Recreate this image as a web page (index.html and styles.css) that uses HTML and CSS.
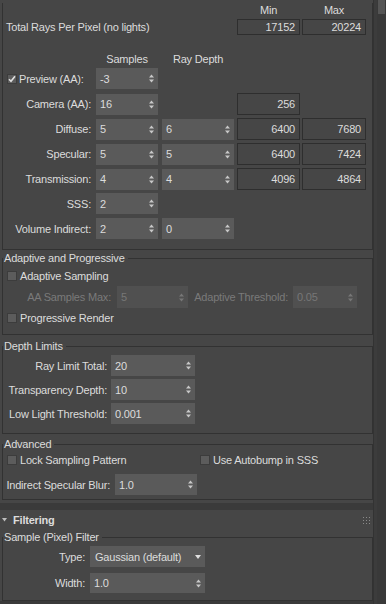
FILE: index.html
```html
<!DOCTYPE html>
<html>
<head>
<meta charset="utf-8">
<link rel="stylesheet" href="styles.css">
</head>
<body>
<div class="app">
  <div class="panel">
    <div class="rollout rollout-main">
      <div class="rays">
        <div class="r r-mm">
          <span></span><span></span><span></span>
          <span class="colhead w63">Min</span>
          <span class="colhead w64">Max</span>
        </div>
        <div class="r r-total">
          <span class="total-label">Total Rays Per Pixel (no lights)</span>
          <span class="ro small w63">17152</span>
          <span class="ro small w64">20224</span>
        </div>
        <div class="r r-cols">
          <span></span>
          <span class="colhead w62">Samples</span>
          <span class="colhead w72">Ray Depth</span>
        </div>
        <div class="r r-first">
          <label class="lbl-left"><span class="cb on"><svg viewBox="0 0 8 8"><path d="M1 4.2L3 6.3L7 1.2" /></svg></span>Preview (AA):</label>
          <span class="spin w62">-3<svg class="arr" viewBox="0 0 5 9"><path d="M0 3.6L2.5 0.6L5 3.6Z M0 5.4L2.5 8.4L5 5.4Z"/></svg></span>
        </div>
        <div class="r">
          <label class="lbl">Camera (AA):</label>
          <span class="spin w62">16<svg class="arr" viewBox="0 0 5 9"><path d="M0 3.6L2.5 0.6L5 3.6Z M0 5.4L2.5 8.4L5 5.4Z"/></svg></span>
          <span></span>
          <span class="ro w63">256</span>
        </div>
        <div class="r">
          <label class="lbl">Diffuse:</label>
          <span class="spin w62">5<svg class="arr" viewBox="0 0 5 9"><path d="M0 3.6L2.5 0.6L5 3.6Z M0 5.4L2.5 8.4L5 5.4Z"/></svg></span>
          <span class="spin w72">6<svg class="arr" viewBox="0 0 5 9"><path d="M0 3.6L2.5 0.6L5 3.6Z M0 5.4L2.5 8.4L5 5.4Z"/></svg></span>
          <span class="ro w63">6400</span>
          <span class="ro w64">7680</span>
        </div>
        <div class="r">
          <label class="lbl">Specular:</label>
          <span class="spin w62">5<svg class="arr" viewBox="0 0 5 9"><path d="M0 3.6L2.5 0.6L5 3.6Z M0 5.4L2.5 8.4L5 5.4Z"/></svg></span>
          <span class="spin w72">5<svg class="arr" viewBox="0 0 5 9"><path d="M0 3.6L2.5 0.6L5 3.6Z M0 5.4L2.5 8.4L5 5.4Z"/></svg></span>
          <span class="ro w63">6400</span>
          <span class="ro w64">7424</span>
        </div>
        <div class="r">
          <label class="lbl">Transmission:</label>
          <span class="spin w62">4<svg class="arr" viewBox="0 0 5 9"><path d="M0 3.6L2.5 0.6L5 3.6Z M0 5.4L2.5 8.4L5 5.4Z"/></svg></span>
          <span class="spin w72">4<svg class="arr" viewBox="0 0 5 9"><path d="M0 3.6L2.5 0.6L5 3.6Z M0 5.4L2.5 8.4L5 5.4Z"/></svg></span>
          <span class="ro w63">4096</span>
          <span class="ro w64">4864</span>
        </div>
        <div class="r">
          <label class="lbl">SSS:</label>
          <span class="spin w62">2<svg class="arr" viewBox="0 0 5 9"><path d="M0 3.6L2.5 0.6L5 3.6Z M0 5.4L2.5 8.4L5 5.4Z"/></svg></span>
        </div>
        <div class="r">
          <label class="lbl">Volume Indirect:</label>
          <span class="spin w62">2<svg class="arr" viewBox="0 0 5 9"><path d="M0 3.6L2.5 0.6L5 3.6Z M0 5.4L2.5 8.4L5 5.4Z"/></svg></span>
          <span class="spin w72">0<svg class="arr" viewBox="0 0 5 9"><path d="M0 3.6L2.5 0.6L5 3.6Z M0 5.4L2.5 8.4L5 5.4Z"/></svg></span>
        </div>
      </div>

      <fieldset class="grp grp-adaptive">
        <legend>Adaptive and Progressive</legend>
        <div class="row chk-row first"><label class="chk"><span class="cb"></span>Adaptive Sampling</label></div>
        <div class="row aa-row">
          <span class="lbl off aa-lbl">AA Samples Max:</span>
          <span class="spin off w71">5<svg class="arr" viewBox="0 0 5 9"><path d="M0 3.6L2.5 0.6L5 3.6Z M0 5.4L2.5 8.4L5 5.4Z"/></svg></span>
          <span class="lbl off thr-lbl">Adaptive Threshold:</span>
          <span class="spin off w64">0.05<svg class="arr" viewBox="0 0 5 9"><path d="M0 3.6L2.5 0.6L5 3.6Z M0 5.4L2.5 8.4L5 5.4Z"/></svg></span>
        </div>
        <div class="row chk-row prog"><label class="chk"><span class="cb"></span>Progressive Render</label></div>
      </fieldset>

      <fieldset class="grp grp-depth">
        <legend>Depth Limits</legend>
        <div class="row spin-row first">
          <span class="lbl depth-lbl">Ray Limit Total:</span>
          <span class="spin w84">20<svg class="arr" viewBox="0 0 5 9"><path d="M0 3.6L2.5 0.6L5 3.6Z M0 5.4L2.5 8.4L5 5.4Z"/></svg></span>
        </div>
        <div class="row spin-row">
          <span class="lbl depth-lbl">Transparency Depth:</span>
          <span class="spin w84">10<svg class="arr" viewBox="0 0 5 9"><path d="M0 3.6L2.5 0.6L5 3.6Z M0 5.4L2.5 8.4L5 5.4Z"/></svg></span>
        </div>
        <div class="row spin-row">
          <span class="lbl depth-lbl">Low Light Threshold:</span>
          <span class="spin w84">0.001<svg class="arr" viewBox="0 0 5 9"><path d="M0 3.6L2.5 0.6L5 3.6Z M0 5.4L2.5 8.4L5 5.4Z"/></svg></span>
        </div>
      </fieldset>

      <fieldset class="grp grp-adv">
        <legend>Advanced</legend>
        <div class="row chk-row first">
          <label class="chk lock"><span class="cb"></span>Lock Sampling Pattern</label>
          <label class="chk bump"><span class="cb"></span>Use Autobump in SSS</label>
        </div>
        <div class="row spin-row blur">
          <span class="lbl blur-lbl">Indirect Specular Blur:</span>
          <span class="spin w82">1.0<svg class="arr" viewBox="0 0 5 9"><path d="M0 3.6L2.5 0.6L5 3.6Z M0 5.4L2.5 8.4L5 5.4Z"/></svg></span>
        </div>
      </fieldset>
    </div>

    <div class="rollout rollout-filter">
      <div class="rollout-head">
        <svg class="twist" viewBox="0 0 5 4"><path d="M0 0H5L2.5 3.5Z"/></svg>
        <span class="rollout-title">Filtering</span>
        <svg class="grip" viewBox="0 0 7 7"><path d="M0 0h1v1h-1zM3 0h1v1h-1zM6 0h1v1h-1zM0 3h1v1h-1zM3 3h1v1h-1zM6 3h1v1h-1zM0 6h1v1h-1zM3 6h1v1h-1zM6 6h1v1h-1z"/></svg>
      </div>
      <fieldset class="grp grp-filter">
        <legend>Sample (Pixel) Filter</legend>
        <div class="row spin-row first">
          <span class="lbl filt-lbl">Type:</span>
          <span class="drop">Gaussian (default)<svg class="darr" viewBox="0 0 6 4"><path d="M0 0H6L3 4Z"/></svg></span>
        </div>
        <div class="row spin-row width">
          <span class="lbl filt-lbl">Width:</span>
          <span class="spin w115">1.0<svg class="arr" viewBox="0 0 5 9"><path d="M0 3.6L2.5 0.6L5 3.6Z M0 5.4L2.5 8.4L5 5.4Z"/></svg></span>
        </div>
      </fieldset>
    </div>
  </div>
  <div class="gutter"></div>
  <div class="scroll"><div class="thumb"></div></div>
</div>
</body>
</html>
```

FILE: styles.css
```css
body {
    margin: 0;
    background-color: #3a3a3a;
    font-family: "Liberation Sans", Arial, sans-serif;
    font-size: 11px;
    letter-spacing: -0.2px;
    color: #dcdcdc;
}

.app {
    display: flex;
    width: 386px;
    height: 604px;
    overflow: hidden;
}

.panel {
    width: 373px;
    flex: none;
    display: flex;
    flex-direction: column;
    gap: 7px;
}

.gutter {
    width: 4px;
    flex: none;
    background-color: #3c3c3c;
    border-left: 1px solid #333;
    box-sizing: border-box;
}

.scroll {
    width: 9px;
    flex: none;
    background-color: #393939;
}

.thumb {
    height: 14px;
    margin: 0 1px;
    background-color: #555;
}

.rollout {
    background-color: #464646;
}

.rollout-main {
    padding-bottom: 3px;
}

/* top block with samples / ray depth */

.rays {
    margin-left: 2px;
    height: 247px;
    box-sizing: border-box;
    border: 1px solid #323232;
    border-top: none;
}

.rays .r {
    display: grid;
    grid-template-columns: 93px 66px 75px 65px 64px;
    align-items: center;
    height: 21px;
    margin-top: 4px;
}

.rays .r-mm {
    height: 14px;
    margin-top: 3px;
}

.rays .r-total {
    height: 16px;
    margin-top: 2px;
}

.rays .r-cols {
    height: 14px;
    margin-top: 17px;
}

.rays .r-first {
    margin-top: 2px;
}

.total-label {
    grid-column: 1 / 4;
    padding-left: 3px;
}

.colhead {
    text-align: center;
}

.lbl {
    text-align: right;
    padding-right: 5px;
    white-space: nowrap;
}

.lbl-left {
    display: flex;
    align-items: center;
    gap: 2px;
    padding-left: 4px;
}

.off {
    color: #7a7a7a;
}

.w62 { width: 62px; }
.w63 { width: 63px; }
.w64 { width: 64px; }
.w71 { width: 71px; }
.w72 { width: 72px; }
.w82 { width: 82px; }
.w84 { width: 84px; }
.w115 { width: 115px; }

.spin {
    display: flex;
    align-items: center;
    justify-content: space-between;
    height: 21px;
    box-sizing: border-box;
    padding: 0 4px 0 4px;
    background-color: #5a5a5a;
}

.spin.off {
    background-color: #505050;
    color: #777;
}

.arr {
    width: 5px;
    height: 9px;
    fill: #c8c8c8;
}

.spin.off .arr {
    fill: #777;
}

.ro {
    display: flex;
    align-items: center;
    justify-content: flex-end;
    height: 22px;
    box-sizing: border-box;
    padding-right: 4px;
    border: 1px solid #2e2e2e;
}

.ro.small {
    height: 16px;
}

.cb {
    display: inline-block;
    width: 8px;
    height: 8px;
    border: 1px solid #3c3c3c;
    background-color: #5c5c5c;
    flex: none;
}

.cb svg {
    display: block;
    width: 8px;
    height: 8px;
    fill: none;
    stroke: #e0e0e0;
    stroke-width: 1.6;
}

/* group boxes */

.grp {
    margin: 4px 0 0 2px;
    padding: 0;
    border: 1px solid #323232;
    min-width: 0;
}

.grp legend {
    padding: 0 3px 0 1px;
    line-height: 14px;
    height: 14px;
}

.row {
    display: flex;
    align-items: center;
}

.chk-row {
    height: 16px;
}

.chk {
    display: flex;
    align-items: center;
    gap: 3px;
    padding-left: 4px;
}

.grp-adaptive {
    margin-top: 1px;
}

.grp-adaptive .first {
    margin-top: 3px;
}

.aa-row {
    height: 22px;
    margin-top: 2px;
}

.aa-row .spin {
    height: 22px;
}

.aa-lbl {
    width: 114px;
    box-sizing: border-box;
    padding-right: 6px;
}

.thr-lbl {
    width: 105px;
    box-sizing: border-box;
    padding-left: 0;
}

.grp-adaptive .prog {
    margin-top: 2px;
    margin-bottom: 8px;
}

.grp-depth {
    margin-top: 4px;
    padding-bottom: 9px;
}

.spin-row {
    height: 21px;
    margin-top: 3px;
}

.grp-depth .first {
    margin-top: 2px;
}

.depth-lbl {
    width: 108px;
    box-sizing: border-box;
    padding-right: 4px;
}

.grp-adv {
    margin-top: 3px;
    padding-bottom: 4px;
}

.grp-adv .first {
    margin-top: 1px;
}

.chk.lock {
    width: 197px;
    box-sizing: border-box;
}

.chk.bump {
    padding-left: 0;
}

.grp-adv .blur {
    margin-top: 6px;
}

.blur-lbl {
    width: 112px;
    box-sizing: border-box;
    padding-right: 5px;
}

/* filtering rollout */

.rollout-head {
    display: flex;
    align-items: center;
    height: 20px;
    padding-left: 2px;
}

.twist {
    width: 5px;
    height: 4px;
    fill: #bdbdbd;
}

.rollout-title {
    font-weight: bold;
    margin-left: 6px;
    flex: 1;
}

.grip {
    width: 7px;
    height: 7px;
    fill: #8a8a8a;
    margin-right: 3px;
}

.grp-filter {
    margin-top: 0;
    padding-bottom: 7px;
}

.grp-filter .first {
    margin-top: 2px;
}

.grp-filter .width {
    margin-top: 6px;
    height: 20px;
}

.grp-filter .width .spin {
    height: 20px;
}

.filt-lbl {
    width: 87px;
    box-sizing: border-box;
    padding-right: 5px;
}

.drop {
    display: flex;
    align-items: center;
    justify-content: space-between;
    width: 115px;
    height: 21px;
    box-sizing: border-box;
    padding: 0 4px 0 5px;
    background-color: #5a5a5a;
}

.darr {
    width: 6px;
    height: 4px;
    fill: #e0e0e0;
}
```
